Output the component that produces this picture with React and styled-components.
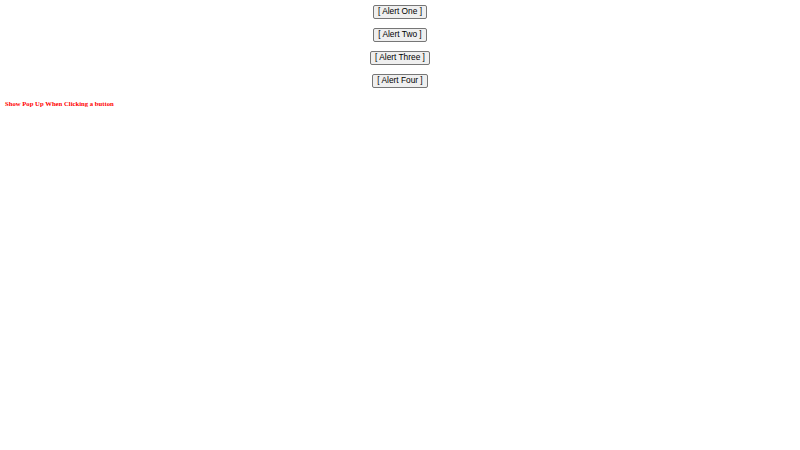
import styled, { createGlobalStyle } from "styled-components";

const GlobalStyle = createGlobalStyle`
  html, body {
    margin: 0;
    padding: 0;
    background: #ffffff;
  }
`;

/* sizes are the 1280px page shrunk to 800px (x0.625) */
const Page = styled.div`
  padding: 5px;
  font-family: "Liberation Serif", "Times New Roman", serif;
`;

const ButtonColumn = styled.div`
  display: flex;
  flex-direction: column;
  align-items: center;
  gap: 9.5px;
`;

const AlertButton = styled.button`
  box-sizing: border-box;
  height: 13.5px;
  font-family: "Liberation Sans", Arial, sans-serif;
  font-size: 8.33px;
  line-height: 9.5px;
  color: #000000;
  background-color: #efefef;
  border: 1px solid #767676;
  border-radius: 2px;
  padding: 1px 4px;
  cursor: pointer;

  &:hover {
    background-color: #e5e5e5;
  }
`;

const Note = styled.h6`
  margin: 12px 0 0 0;
  font-size: 6.7px;
  line-height: 8px;
  font-weight: bold;
  color: #ff0000;
`;

const alerts = ["One", "Two", "Three", "Four"];

function App() {
  return (
    <Page>
      <GlobalStyle />
      <ButtonColumn>
        {alerts.map((name) => (
          <AlertButton key={name} onClick={() => window.alert(`Alert ${name}`)}>
            [ Alert {name} ]
          </AlertButton>
        ))}
      </ButtonColumn>
      <Note>Show Pop Up When Clicking a button</Note>
    </Page>
  );
}

export default App;
